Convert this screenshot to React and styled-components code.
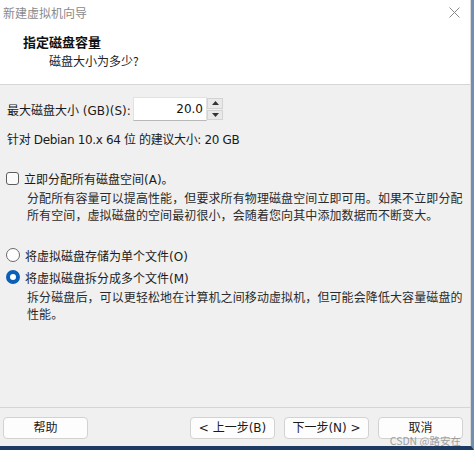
import React from "react";
import styled, { createGlobalStyle } from "styled-components";

const Global = createGlobalStyle`
  html, body { margin: 0; padding: 0; background: #f0f0f0; }
  body { font-family: "DejaVu Sans", "Noto Sans CJK SC", sans-serif; }
`;

const Window = styled.div`
  position: relative;
  width: 474px;
  height: 450px;
  box-sizing: border-box;
  display: flex;
  flex-direction: column;
  border-right: 3px solid #6f8fb3;
  border-bottom: 4px solid #1d3a63;
  background: #f0f0f0;
  color: #1a1a1a;
  font-size: 12px;
  overflow: hidden;
`;

const TitleBar = styled.div`
  height: 24px;
  background: #fff;
  display: flex;
  align-items: center;
  justify-content: space-between;
  padding: 0 10px 0 3px;
  border-right: 1px solid #d8d8d8;
`;

const TitleText = styled.span`
  font-family: "Noto Sans CJK SC", sans-serif;
  font-size: 12px;
  color: #8a8a8a;
`;

const Header = styled.div`
  background: #fff;
  height: 61px;
  box-sizing: border-box;
  padding: 9px 0 0 23px;
  border-bottom: 1px solid #d6d6d6;
  border-right: 1px solid #d8d8d8;
  display: flex;
  flex-direction: column;
`;

const HeaderTitle = styled.div`
  font-family: "Noto Sans CJK SC", sans-serif;
  font-weight: 700;
  font-size: 13px;
  line-height: 18px;
  color: #111;
`;

const HeaderSub = styled.div`
  font-family: "Noto Sans CJK SC", sans-serif;
  font-size: 12px;
  line-height: 18px;
  color: #222;
  padding-left: 26px;
  margin-top: 1px;
`;

const Body = styled.div`
  flex: 1;
  display: flex;
  flex-direction: column;
  padding: 12px 0 0 6px;
  border-right: 1px solid #d8d8d8;
`;

const SizeRow = styled.div`
  display: flex;
  align-items: center;
  height: 24px;
`;

const Label = styled.span`
  font-size: 12px;
  color: #1a1a1a;
  white-space: nowrap;
`;

const SizeLabel = styled(Label)`
  width: 126px;
  padding-left: 1px;
`;

const Spin = styled.div`
  display: flex;
  height: 24px;
`;

const SpinInput = styled.div`
  width: 74px;
  box-sizing: border-box;
  background: #fff;
  border: 1px solid #e2e2e2;
  border-bottom-color: #b9b9b9;
  display: flex;
  align-items: center;
  justify-content: flex-end;
  padding-right: 3px;
  font-size: 12px;
  color: #111;
`;

const SpinButtons = styled.div`
  width: 16px;
  display: flex;
  flex-direction: column;
  gap: 1px;
  padding: 1px 0;
  box-sizing: border-box;
`;

const SpinBtn = styled.div`
  flex: 1;
  background: #e9e9e9;
  border: 1px solid #d3d3d3;
  display: flex;
  align-items: center;
  justify-content: center;
`;

const Hint = styled.div`
  margin-top: 11px;
  padding-left: 1px;
  font-size: 12px;
  line-height: 16px;
  letter-spacing: -0.35px;
  white-space: nowrap;
`;

const Option = styled.div`
  display: flex;
  align-items: center;
  gap: 5px;
  height: 18px;
  margin-top: ${(p) => p.$mt || 0}px;
`;

const CheckBox = styled.span`
  width: 13px;
  height: 13px;
  box-sizing: border-box;
  border: 1px solid #5d5d5d;
  border-radius: 3px;
  background: #fbfbfb;
  flex: none;
`;

const Radio = styled.span`
  width: 14px;
  height: 14px;
  box-sizing: border-box;
  border-radius: 50%;
  flex: none;
  border: ${(p) => (p.$on ? "4px solid #0a5fb8" : "1px solid #6a6a6a")};
  background: #fff;
`;

const Desc = styled.div`
  padding-left: 21px;
  margin-top: ${(p) => p.$mt || 4}px;
  font-size: 12px;
  line-height: 17px;
  color: #2a2a2a;
  width: 440px;
  letter-spacing: 0.1px;
`;

const Footer = styled.div`
  height: 39px;
  border-top: 1px solid #d4d4d4;
  display: flex;
  align-items: flex-start;
  padding: 9px 0 0 3px;
  box-sizing: border-box;
  gap: 9px;
  border-right: 1px solid #d8d8d8;
`;

const Button = styled.div`
  width: 85px;
  height: 22px;
  box-sizing: border-box;
  background: #fdfdfd;
  border: 1px solid #d2d2d2;
  border-radius: 4px;
  display: flex;
  align-items: center;
  justify-content: center;
  font-size: 12px;
  line-height: 13px;
  color: #1a1a1a;
  white-space: nowrap;
  margin-left: ${(p) => p.$ml || 0}px;
`;

const Watermark = styled.div`
  position: absolute;
  right: 10px;
  bottom: 0;
  font-family: "Noto Sans CJK SC", sans-serif;
  font-size: 10.5px;
  line-height: 11px;
  color: rgba(120, 120, 120, 0.7);
`;

const Arrow = ({ up }) => (
  <svg width="7" height="4" viewBox="0 0 7 4">
    <path d={up ? "M0 4 L3.5 0 L7 4 Z" : "M0 0 L3.5 4 L7 0 Z"} fill="#333" />
  </svg>
);

const CloseIcon = () => (
  <svg width="11" height="11" viewBox="0 0 11 11">
    <path d="M0.5 0.5 L10.5 10.5 M10.5 0.5 L0.5 10.5" stroke="#8a8a8a" strokeWidth="1" />
  </svg>
);

export default function App() {
  return (
    <>
      <Global />
      <Window>
        <TitleBar>
          <TitleText>新建虚拟机向导</TitleText>
          <CloseIcon />
        </TitleBar>
        <Header>
          <HeaderTitle>指定磁盘容量</HeaderTitle>
          <HeaderSub>磁盘大小为多少?</HeaderSub>
        </Header>
        <Body>
          <SizeRow>
            <SizeLabel>最大磁盘大小 (GB)(S):</SizeLabel>
            <Spin>
              <SpinInput>20.0</SpinInput>
              <SpinButtons>
                <SpinBtn><Arrow up /></SpinBtn>
                <SpinBtn><Arrow /></SpinBtn>
              </SpinButtons>
            </Spin>
          </SizeRow>
          <Hint>针对 Debian 10.x 64 位 的建议大小: 20 GB</Hint>
          <Option $mt={21}>
            <CheckBox />
            <Label>立即分配所有磁盘空间(A)。</Label>
          </Option>
          <Desc>
            分配所有容量可以提高性能，但要求所有物理磁盘空间立即可用。如果不立即分配所有空间，虚拟磁盘的空间最初很小，会随着您向其中添加数据而不断变大。
          </Desc>
          <Option $mt={21}>
            <Radio />
            <Label>将虚拟磁盘存储为单个文件(O)</Label>
          </Option>
          <Option $mt={4}>
            <Radio $on />
            <Label>将虚拟磁盘拆分成多个文件(M)</Label>
          </Option>
          <Desc>
            拆分磁盘后，可以更轻松地在计算机之间移动虚拟机，但可能会降低大容量磁盘的性能。
          </Desc>
        </Body>
        <Footer>
          <Button>帮助</Button>
          <Button $ml={93}>&lt; 上一步(B)</Button>
          <Button>下一步(N) &gt;</Button>
          <Button>取消</Button>
        </Footer>
        <Watermark>CSDN @路安在</Watermark>
      </Window>
    </>
  );
}
